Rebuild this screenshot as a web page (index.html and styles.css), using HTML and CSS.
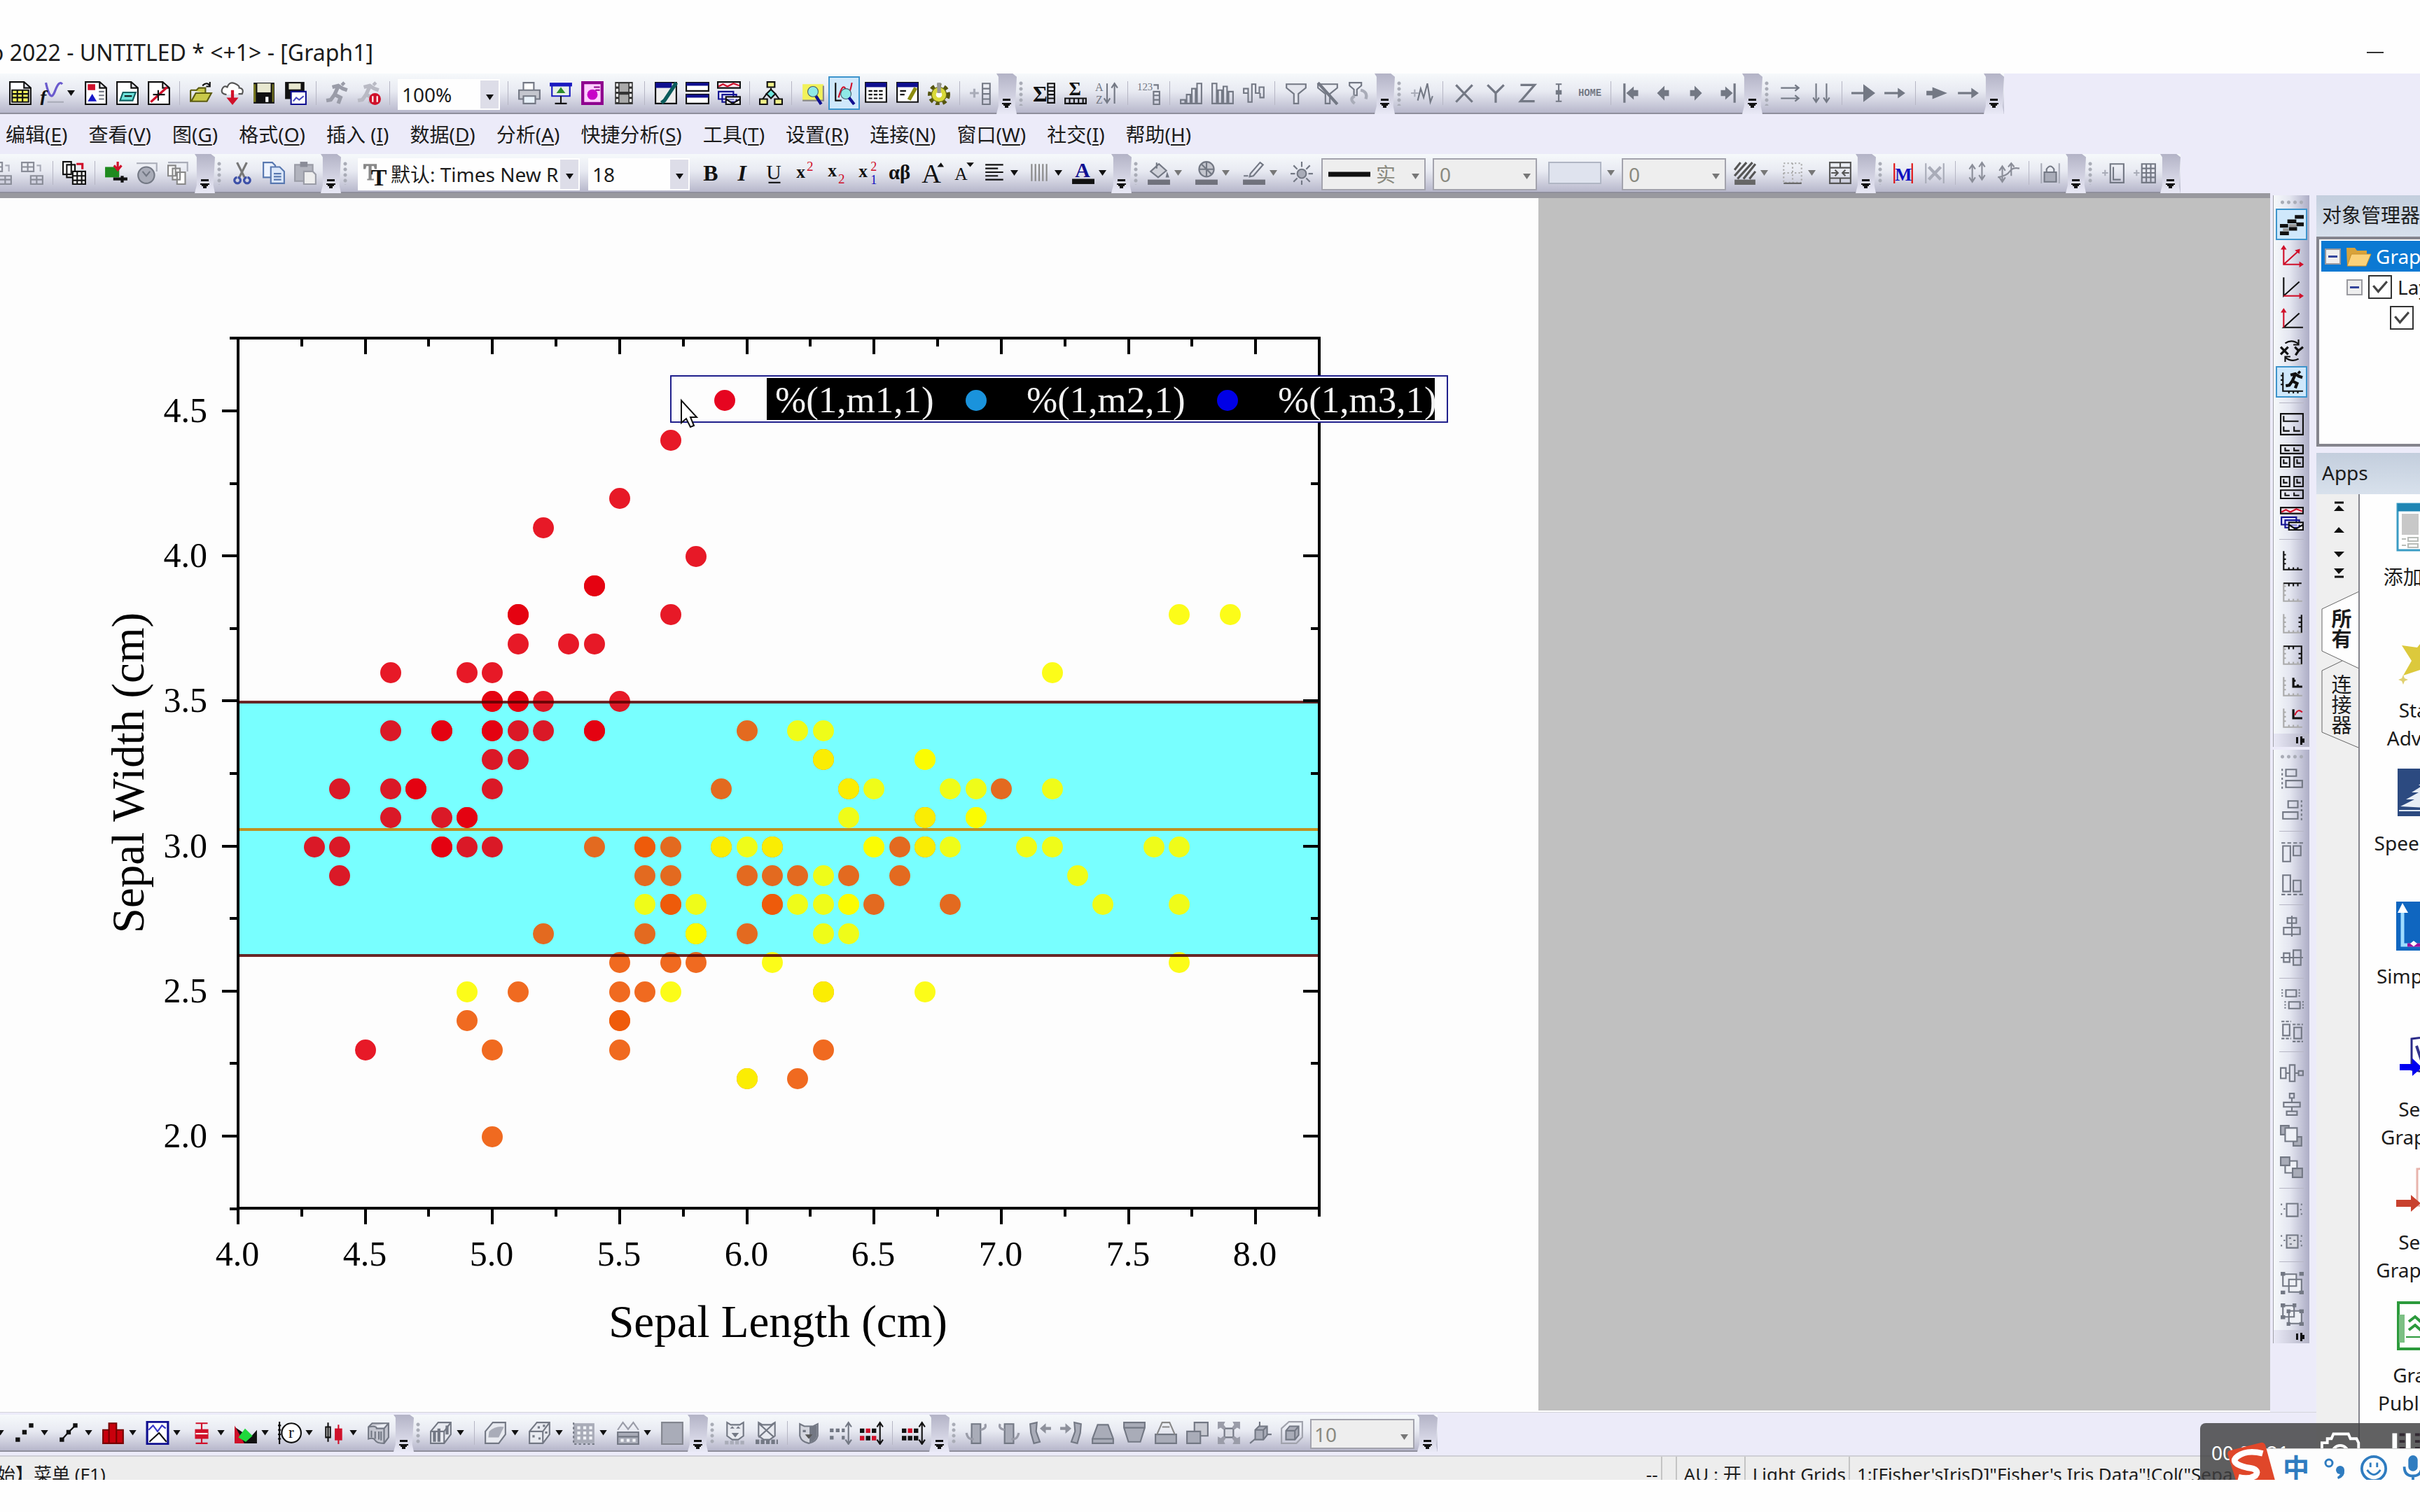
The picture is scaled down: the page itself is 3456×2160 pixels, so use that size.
FILE: index.html
```html
<!DOCTYPE html>
<html lang="zh-CN">
<head>
<meta charset="utf-8">
<title>UNTITLED - Graph1</title>
<link rel="stylesheet" href="styles.css">
</head>
<body>
<div class="frame">
  <header class="titlebar">
    <h1>o 2022 - UNTITLED * &lt;+1&gt; - [Graph1]</h1>
    <button class="minimise" aria-label="Minimise"></button>
  </header>

  <div class="bar bar-top">
    <div class="toolbar first">
      <span data-icons="sheet fn^ report layout matrix | open cloud save saveas | run runstop |"></span>
      <label class="combo zoom"><select aria-label="Zoom"><option>100%</option></select></label>
      <span data-icons="| printer slides pink film | note windows cascade | tree | find zoomgraph* table edit gear | addcol"></span>
    </div>
    <div class="toolbar"><span data-icons="sigcol sigrow sort | num | bars1 bars2 bars3 | funnel funnelx funnelr"></span></div>
    <div class="toolbar"><span data-icons="wave | gx gy gz info home | first prev next last"></span></div>
    <div class="toolbar"><span data-icons="right2 down2 | arrowbig arrowsm | arrowfat arrowsm"></span></div>
  </div>

  <nav class="menu">
    <button>编辑(<u>E</u>)</button><button>查看(<u>V</u>)</button><button>图(<u>G</u>)</button><button>格式(<u>O</u>)</button><button>插入 (<u>I</u>)</button><button>数据(<u>D</u>)</button><button>分析(<u>A</u>)</button><button>快捷分析(<u>S</u>)</button><button>工具(<u>T</u>)</button><button>设置(<u>R</u>)</button><button>连接(<u>N</u>)</button><button>窗口(<u>W</u>)</button><button>社交(<u>I</u>)</button><button>帮助(<u>H</u>)</button>
  </nav>

  <div class="bar">
    <div class="toolbar cut"><span data-icons="paste1 paste1 | pages | plug halt pagesg"></span></div>
    <div class="toolbar"><span data-icons="scissors copy paste"></span></div>
    <div class="toolbar">
      <label class="combo font"><span data-icons="tt"></span><select aria-label="Font"><option>默认: Times New R</option></select></label>
      <label class="combo size"><select aria-label="Font size"><option>18</option></select></label>
      <span data-icons="bold italic under sup sub supsub greek bigger smaller align^ vlines^ color^"></span>
    </div>
    <div class="toolbar wide">
      <span data-icons="bucket^ palette^ pen^ sun"></span>
      <label class="combo off line"><svg class="stroke" viewBox="0 0 60 8"><path d="M0 4H60" stroke="#111" stroke-width="7"/></svg><select aria-label="Line style" disabled><option>实</option></select></label>
      <label class="combo off"><select aria-label="Line width" disabled><option>0</option></select></label>
      <label class="swatch"><select aria-label="Fill colour" disabled><option></option></select></label>
      <label class="combo off"><select aria-label="Pattern" disabled><option>0</option></select></label>
      <span data-icons="hatch^ border^ cells"></span>
    </div>
    <div class="toolbar"><span data-icons="mask unmask | spread spreadx | lock"></span></div>
    <div class="toolbar"><span data-icons="newl newgrid"></span></div>
  </div>

  <main class="middle">
    <div class="left">
      <div class="desk">
        <section class="workspace">
          <svg class="plot" id="plot" viewBox="0 283 2197 1732" role="img" aria-label="Sepal Width against Sepal Length"></svg>
        </section>
        <aside class="dock">
          <div class="vbar"><span data-icons="stairs* axis3 axisx axisy xy runner* | lay1 lay2 lay3 cascade | ax1 ax2 ax3 ax4 ax5 ax6"></span></div>
          <div class="vbar"><span data-icons="al ar | at ab | ac am | sw sh | dh dv front back | grp1 grp2 | obj1 obj2"></span></div>
        </aside>
      </div>
      <div class="bar bottom">
        <div class="toolbar start"><span data-icons="none^ scatter^ lineplot^ column^ multi^ box^ area^ polar^ candle^ surf"></span></div>
        <div class="toolbar"><span data-icons="g3bar^ | g3a^ g3b^ heat^ panel^ square"></span></div>
        <div class="toolbar"><span data-icons="mask1 mask2 | shield dots dotsr | dotsk"></span></div>
        <div class="toolbar"><span data-icons="rotl rotr tiltl tiltr trap1 trap2 persp boxes fit cube1 cube2"></span><label class="combo off"><select aria-label="Rotation angle" disabled><option>10</option></select></label></div>
      </div>
    </div>

    <aside class="panel">
      <h2>对象管理器</h2>
      <ul class="tree">
        <li class="root"><span class="minus"></span><svg class="folder" viewBox="0 0 38 32"><path d="M2 4h12l3 4h14v6H9L3 30z" fill="#d9a33a"/><path d="M9 13h28l-7 17H3z" fill="#fbd27a" stroke="#c98f2a"/></svg><span>Graph1</span></li>
        <li class="layer"><span class="minus"></span><label><input type="checkbox" checked> Layer1</label></li>
        <li class="data"><label><input type="checkbox" checked aria-label="Plot"></label></li>
      </ul>
      <h2>Apps</h2>
      <div class="apps">
        <div class="tabs">
          <svg class="outline" viewBox="0 0 60 380"><path d="M37 238L8 252V340L60 362" fill="none" stroke="#666" stroke-width="1"/><path d="M61 139L8 164V224L61 249" fill="#fefefe" stroke="#666" stroke-width="1"/></svg>
          <svg class="arrows" viewBox="0 0 52 120"><path d="M18 8h13M18 114h13" stroke="#111" stroke-width="3"/><path d="M17 20l7-8 8 8zM17 51l7-8 8 8zM17 78l7 8 8-8zM17 102l7 8 8-8z" fill="#111"/></svg>
          <button class="tab on">所有</button>
          <button class="tab">连接器</button>
        </div>
        <ul class="applist">
          <li><svg viewBox="0 0 72 72"><rect x="2" y="2" width="68" height="66" fill="#fff" stroke="#3a9cc4" stroke-width="3"/><path d="M2 7H70" stroke="#1f86b4" stroke-width="11"/><rect x="8" y="16" width="24" height="30" fill="#c8c8c8"/><path d="M8 52h6M17 50h14v5H17zM8 61h6M17 59h14v5H17z" fill="none" stroke="#b8bcb8" stroke-width="2"/></svg>添加App</li>
          <li><svg viewBox="0 0 72 72"><path d="M8 14l22 3 12-15 6 20 22 8-20 10 2 24-18-15-24 8 12-21z" fill="#dcc93c"/><path d="M10 56l2 5 5 2-5 2-2 5-2-5-5-2 5-2z" fill="#e0d070"/></svg>Stats<br>Advisor</li>
          <li><svg viewBox="0 0 72 72"><rect x="2" width="68" height="68" fill="#2c4a80"/><path d="M6 54L26 44H14L32 34H22L38 24H32L46 12V56z" fill="#e6edf5"/><path d="M4 60h66" stroke="#dfe8f2" stroke-width="2"/></svg>Speedy Fit</li>
          <li><svg viewBox="0 0 72 72"><rect width="70" height="70" fill="#0f66c0"/><path d="M9 12V62H70" fill="none" stroke="#9fdcff" stroke-width="5"/><path d="M2 16L9 2l8 14z" fill="#fff"/><path d="M16 62h54" stroke="#a0109c" stroke-width="5"/><path d="M20 60l5-4 5 4-5 4zM38 58l5-4 5 4-5 4z" fill="#fff"/></svg>Simple Fit</li>
          <li><svg viewBox="0 0 72 72"><path d="M22 6L70 0V60L22 50z" fill="#fff" stroke="#2a2a88" stroke-width="3"/><path d="M29 16l6 18 5-16 5 16 6-18" fill="none" stroke="#33338c" stroke-width="4"/><path d="M5 42h18v-8l14 13-14 12v-8H5z" fill="#0000f0"/></svg>Send<br>Graph to</li>
          <li><svg viewBox="0 0 72 72"><path d="M30 2L70 0V60L30 54z" fill="#fff" stroke="#e8b4ac" stroke-width="3"/><path d="M0 46h21v-7l14 12-14 12v-7H0z" fill="#c8412e"/></svg>Send<br>Graphs to</li>
          <li><svg viewBox="0 0 72 72"><rect x="3" y="3" width="66" height="66" fill="#fff" stroke="#2c9a3c" stroke-width="4"/><path d="M8 20v40" stroke="#7cc084" stroke-width="8"/><path d="M14 52h54" stroke="#2c9a3c" stroke-width="2"/><path d="M18 30l9-7 9 8 10-8 8 7M18 42l9-7 9 8 10-8 8 7" fill="none" stroke="#2c9a3c" stroke-width="4"/></svg>Graph<br>Publisher</li>
        </ul>
      </div>
    </aside>
  </main>

  <footer class="status">
    <span class="hint">始】菜单 (F1)</span>
    <span class="cell dash">--</span>
    <span class="cell edge">AU : 开</span>
    <span class="cell">Light Grids</span>
    <span class="cell last">1:[Fisher'sIrisD]"Fisher's Iris Data"!Col("Sepa</span>
  </footer>

  <div class="recorder">
    <span class="timer">00:00:21</span>
    <svg class="camera" viewBox="0 0 60 40"><path d="M3 36V16h8V10h6l3-7h22l3 7h9l3 6v20" fill="none" stroke="#fff" stroke-width="4"/><circle cx="30" cy="32" r="12" fill="none" stroke="#fff" stroke-width="4"/></svg>
    <svg class="film" viewBox="0 0 42 40"><path d="M5 2V40M25 2V40" stroke="#fff" stroke-width="7"/><path d="M12 4h8M12 14h8M12 24h8M35 4h7M35 14h7M35 24h7" stroke="#332a33" stroke-width="4"/></svg>
  </div>
  <div class="ime">
    <span>中</span>
    <svg viewBox="0 0 32 40"><circle cx="8" cy="12" r="5" fill="none" stroke="#2f7cc0" stroke-width="3"/><circle cx="24" cy="22" r="6" fill="#2f7cc0"/><path d="M30 22q1 10-9 13l-1-3q6-4 5-10z" fill="#2f7cc0"/></svg>
    <svg viewBox="0 0 42 42"><circle cx="21" cy="21" r="18" fill="none" stroke="#2f7cc0" stroke-width="4"/><path d="M16 12v7M26 12v7M11 23q10 14 20 0" fill="none" stroke="#2f7cc0" stroke-width="3"/></svg>
    <svg viewBox="0 0 32 42"><rect x="9" y="1" width="14" height="24" rx="7" fill="#2f7cc0"/><path d="M3 18q0 14 13 14t13-14M16 32v10" fill="none" stroke="#2f7cc0" stroke-width="4"/></svg>
  </div>
  <svg class="sogou" viewBox="0 0 72 56"><path d="M3 13L50 1q5-1 7 4L71 56H13L1 18q0-4 2-5z" fill="#e0472a"/><path d="M53 17Q30 11 16 21t14 17q20 2 12 12-10 6-25 2" fill="none" stroke="#fff" stroke-width="9"/></svg>
</div>
<script src="app.js"></script>
</body>
</html>
```
FILE: styles.css
```css
* { box-sizing: border-box; }
body {
  margin: 0;
  min-height: 100vh;
  background: #fefefe;
  color: #1c1c1c;
  font: 28px/40px "Noto Sans", "Noto Sans CJK SC", sans-serif;
  overflow: hidden;
}
button, select, input { font: inherit; color: inherit; margin: 0; padding: 0; border: 0; background: none; }
h1, h2, ul { margin: 0; padding: 0; font-weight: 400; list-style: none; }
.frame {
  position: relative;
  display: flex;
  flex-direction: column;
  min-height: calc(100vh - 46px);
  background: #ecebf9;
  overflow: hidden;
}

.titlebar {
  display: flex;
  justify-content: space-between;
  align-items: center;
  height: 105px;
  padding: 44px 52px 0 0;
  background: #fefefe;
}
.titlebar h1 { font-size: 32px; margin-left: -14px; white-space: pre; }
.minimise { width: 24px; height: 2px; background: #333; }

.bar { display: flex; height: 56px; white-space: nowrap; overflow: hidden; }
.bar-top { height: 58px; }
.toolbar { display: flex; flex: none; align-items: stretch; background: linear-gradient(#f6f9fb, #e8eaf2 45%, #b7b7cb); border-bottom: 2px solid #8f8f9c; }
.toolbar > span, .vbar > span, .combo > span { display: contents; }
.toolbar::before {
  content: "";
  width: 16px;
  background: radial-gradient(circle, #a9acb6 2px, transparent 3px) 0 10px / 12px 8px repeat-y;
  background-clip: content-box;
  padding: 10px 0;
}
.toolbar.first::before, .toolbar.cut::before, .toolbar.start::before { display: none; }
.toolbar.first { padding-left: 6px; }
.toolbar.cut { margin-left: -22px; }
.toolbar.start { margin-left: -50px; }
.toolbar::after {
  content: "";
  width: 29px;
  margin-bottom: -2px;
  background:
    linear-gradient(#111, #111) 50% 36px / 11px 3px no-repeat,
    linear-gradient(#111, #111) 50% 42px / 13px 2px no-repeat,
    linear-gradient(#111, #111) 50% 44px / 9px 2px no-repeat,
    linear-gradient(#111, #111) 50% 46px / 5px 3px no-repeat,
    linear-gradient(#b3b3c6, #e9e9f6);
  clip-path: polygon(0 0, 80% 0, 100% 8%, 92% 80%, 100% 100%, 0 100%, 10% 80%, 10% 8%);
}
.tool { flex: none; width: 45px; display: flex; align-items: center; justify-content: center; }
.tool svg { width: 34px; height: 34px; display: block; }
.tool.on { margin: 4px 0; background: #cfe8fb; border: 2px solid #3d94cc; }
.caret { flex: none; width: 18px; display: flex; align-items: center; }
.caret::before, .combo::after, .swatch::after {
  content: "";
  width: 11px;
  height: 8px;
  background: #111;
  clip-path: polygon(0 0, 100% 0, 50% 100%);
}
.wide .caret { width: 23px; }
.wide .caret::before, .off::after, .swatch::after { background: #777; }
.sep { flex: none; width: 15px; background: linear-gradient(#b6b6c4, #b6b6c4) 50% 50% / 1px 34px no-repeat; }

.combo {
  position: relative;
  display: flex;
  align-items: center;
  width: 149px;
  margin: 6px 4px 2px;
  background: #fefefe;
}
.wide .combo { margin: 6px 4px 2px 6px; }
.combo::after { position: absolute; right: 7px; top: 20px; }
.combo select { appearance: none; flex: 1; min-width: 0; height: 100%; padding-left: 4px; opacity: 1; }
.wide .combo select { padding-left: 8px; }
.combo.zoom { width: 146px; margin: 8px 4px 4px; }
.combo.font { width: 317px; margin-left: 8px; }
.combo.size { width: 145px; margin: 6px 8px 2px; }
.combo:not(.off) { background: linear-gradient(90deg, transparent calc(100% - 26px), #dddde8 0), #fefefe; border: 2px solid #fefefe; }
.combo.off { background: #eee; border: 2px solid #a3a3ad; color: #8a8a80; }
.combo.font select { padding: 0; }
.combo.line .stroke { width: 60px; height: 8px; margin-left: 8px; }
.swatch { display: flex; align-items: center; margin: 12px 4px 12px 12px; }
.swatch select { appearance: none; width: 76px; height: 32px; margin-right: 8px; border: 2px solid #b0b6c4; opacity: 1; background: #dfe3ee; }

.menu { display: flex; gap: 30px; height: 57px; padding-left: 8px; white-space: pre; }
.menu u { text-underline-offset: 3px; }

.middle { display: flex; flex: 1; }
.left { flex: 1; display: flex; flex-direction: column; min-width: 0; }
.desk { flex: 1; display: flex; }
.workspace {
  flex: 1;
  display: grid;
  grid-template-columns: 2197fr 1045fr;
  align-items: stretch;
  border-top: 7px solid #99999f;
  border-bottom: 2px solid #fefefe;
  background: #c0c0c0;
}
.plot { width: 100%; background: #fdfdfd; display: block; }
.plot text { font-family: "Liberation Serif", serif; }
.dock { width: 66px; padding: 3px 10px 0 4px; }
.vbar {
  display: flex;
  flex-direction: column;
  margin-bottom: 4px;
  background: linear-gradient(90deg, #f6f9fb, #e4e6f0 45%, #adadc6);
  border-left: 1px solid #a0a0a8;
}
.vbar::before { content: ""; height: 19px; margin: 0 8px; background: radial-gradient(circle, #a9acb6 2px, transparent 3px) 0 4px / 9px 12px repeat-x; }
.vbar::after {
  content: "";
  height: 19px;
  background:
    linear-gradient(#111, #111) 32px 50% / 3px 9px no-repeat,
    linear-gradient(#111, #111) 38px 50% / 3px 12px no-repeat,
    linear-gradient(#111, #111) 41px 50% / 3px 6px no-repeat,
    linear-gradient(90deg, #e9e9f6, #b3b3c6);
}
.vbar .tool { width: auto; height: 45px; }
.vbar .tool.on { margin: 0 3px; }
.vbar .sep { width: auto; height: 15px; margin: 0 8px; background: linear-gradient(#b6b6c4, #b6b6c4) 0 50% / 100% 1px no-repeat; }
.bottom { height: 64px; padding: 3px 0 5px; border-top: 1px solid #d4d4da; border-bottom: 2px solid #cfcfd6; }

.panel { width: 148px; padding-top: 3px; overflow: hidden; display: flex; flex-direction: column; }
.panel h2 { width: 240px; height: 59px; padding: 8px 0 0 8px; font-size: 28px; background: linear-gradient(#c3cedd, #d8e1ec); }
.tree { width: 240px; height: 300px; margin-bottom: 9px; padding: 2px 0 0 3px; background: #fefefe; border: 4px solid #85858d; border-right: 0; }
.tree li { display: flex; align-items: center; height: 44px; gap: 8px; }
.tree .root { padding-left: 5px; gap: 6px; background: #0b79d3; color: #fff; }
.tree .layer { padding-left: 36px; }
.tree .data { padding-left: 98px; }
.tree label { display: flex; align-items: center; gap: 8px; }
.minus { flex: none; width: 23px; height: 23px; border: 2px solid #9a9aa0; background: linear-gradient(#34469c, #34469c) 50% 50% / 13px 3px no-repeat #eee; }
.folder { flex: none; width: 38px; height: 32px; }
.tree input { appearance: none; flex: none; width: 34px; height: 34px; border: 2px solid #333; background: #fff; }
.tree input::after { content: ""; display: block; width: 22px; height: 18px; margin: 6px 4px; background: #444; clip-path: polygon(0 45%, 12% 35%, 38% 72%, 90% 0, 100% 12%, 38% 100%); }
.apps { flex: 1; display: flex; width: 240px; background: #efefef; }
.tabs { position: relative; width: 60px; flex: none; padding-left: 8px; }
.outline { position: absolute; left: 0; top: 0; width: 60px; height: 380px; }
.arrows { position: relative; display: block; width: 52px; height: 120px; margin: 4px 0 14px; }
.tab { position: relative; display: block; width: 52px; height: 108px; writing-mode: vertical-rl; line-height: 52px; text-align: center; font-size: 29px; }
.tab.on { font-weight: 700; }
.applist { width: 178px; border-left: 2px solid #85858d; background: #fefefe; text-align: center; padding-top: 10px; }
.applist li { height: 190px; padding-top: 2px; }
.applist svg { display: block; width: 72px; height: 72px; margin: 0 auto 14px; }

.status { display: flex; height: 33px; line-height: 50px; font-size: 26px; background: #ededed; white-space: pre; overflow: hidden; }
.hint { flex: 1; margin-left: -4px; }
.cell { border-right: 2px solid #c4c4c4; padding: 0 4px 0 10px; }
.dash { margin-right: 19px; }
.edge { border-left: 2px solid #c4c4c4; }
.last { width: 814px; border: 0; }

.recorder { position: absolute; right: 0; bottom: 0; width: 314px; height: 81px; padding: 12px 0 0 16px; display: flex; gap: 44px; background: rgba(62, 62, 64, 0.82); border-radius: 8px 0 0 0; color: #fff; }
.timer { line-height: 60px; }
.recorder svg { height: 40px; }
.camera { width: 60px; }
.film { width: 42px; }
.ime { position: absolute; right: 0; bottom: 0; width: 256px; height: 45px; padding: 8px 0 0 60px; display: flex; gap: 16px; background: #fdfdfd; border-top: 1px solid #ccc; color: #2f7cc0; overflow: hidden; }
.ime span { font-size: 38px; line-height: 36px; font-weight: 700; }
.ime svg { flex: none; height: 40px; width: 40px; }
.sogou { position: absolute; right: 206px; bottom: 0; width: 70px; height: 54px; }
```
FILE: app.js
```js
// Small drawing helpers; every icon sits on a 32 x 32 grid.
const G = '#737884', K = '#111', F = '#a9acb8', R = '#d0102a', N = '#101090';
const p = (d, s = G, f = 'none', w = 2) => `<path d="${d}" stroke="${s}" fill="${f}" stroke-width="${w}"/>`;
const f = (d, c = G) => `<path d="${d}" fill="${c}"/>`;
const t = (x, y, s, size = 30, c = K, extra = '') => `<text x="${x}" y="${y}" font-size="${size}" fill="${c}" font-family="Liberation Serif, serif" ${extra}>${s}</text>`;
const doc = p('M2 1H21L30 9V31H2zM21 1V9H30', K, '#fff');
const runner = c => p('M22 2l3 3M9 8l8-2 6 4 6 2M17 7l-5 11 8 4-3 8M12 18l-5 7-6 1', c, 'none', 5);
const axes = 'M5 3V28H30M5 8h3M5 14h3M5 20h3M12 28v-3M18 28v-3M24 28v-3';
const cubeD = 'M2 14L12 2H29V18L20 30H2zM2 14H20V30M20 14L29 2';

const icons = {
  none: '',
  sheet: doc + f('M6 12H26V28H6z', '#f2f25a') + p('M5 12H27V28H5zM5 17H27M5 22H27M12 12V28M19 12V28', K),
  fn: p('M8 2Q14 30 20 14T30 4', '#6a5acd', 'none', 3) + p('M10 28H32', F) + t(0, 30, 'f', 26, K, 'font-weight="700" font-style="italic"'),
  report: doc + f('M5 4H15V12H5z', R) + f('M5 27L11 17L17 27z', '#1818c8') + p('M20 14h7M20 19h7M20 24h7', G),
  layout: doc + p('M10 15H27L23 26H6z', '#0f6060', '#6fe3dc') + p('M12 20h10', K),
  matrix: doc + p('M5 28L27 8', R, 'none', 3) + p('M15 12V26M8 18H24', K),
  open: p('M2 12V27H24L30 16H9L3 27M2 12H10L13 9H22V16', '#5c5c10', '#c9c94a') + p('M18 6Q24 0 28 6M28 1V7H23', K),
  cloud: p('M8 18Q0 17 2 11T9 8Q12 0 19 3T25 9Q32 10 29 17H24', '#555', '#fff') + p('M16 12V28', R, 'none', 4) + f('M8 22H24L16 32z', R),
  save: f('M2 2H30V30H2z', K) + f('M7 3H25V15H7z', '#e8e8d0') + f('M2 4H5V28H2zM27 4H29V28H27z', '#7a7a20') + f('M18 21H22V28H18z', '#fff'),
  saveas: f('M2 1H28V24H2z', K) + f('M7 3H23V11H7z', '#e8e8d0') + p('M10 14H30V31H10z', N, '#fff') + p('M13 27l4-5 4 3 6-5', '#4a4ac0'),
  run: runner('#9a9ca8'),
  runstop: runner('#b9bac4') + `<circle cx="24" cy="24" r="8" fill="${R}"/>` + p('M21 20V28M27 20V28', '#fff'),
  printer: p('M8 13V2H22V13', G, '#fff') + p('M2 12H30V24H2z', G, '#c4c6ce') + p('M8 20H24V30H8z', G, '#e9f2fa'),
  slides: f('M1 2H31V7H1z', '#1a1ac0') + p('M4 6H28V20H4z', '#1a1ac0', '#e8f0e8') + f('M10 16l6-8 6 8z', '#2c8c2c') + p('M16 20V30M8 30H24', K),
  pink: p('M3 2H29V30H3z', '#8e008e', '#ffd0ff', 4) + `<circle cx="16" cy="18" r="7" fill="#c800c8"/>` + p('M18 8h8M20 12h6', '#8e008e'),
  film: f('M4 1H28V31H4z', '#333') + f('M10 3H22V14H10zM10 18H22V29H10z', '#aaa') + p('M7 3V30M25 3V30', '#fff', 'none', 3).replace('/>', ' stroke-dasharray="4 3"/>'),
  note: p('M2 2H30V30H2z', K, '#eee') + f('M2 2H24V9H2z', N) + p('M30 2L14 26L10 29', '#0c5c5c', 'none', 5),
  windows: p('M1 2H31V13H1zM1 18H31V30H1z', K, '#fff') + f('M1 2H31V6H1zM1 18H31V22H1z', N),
  cascade: p('M1 1H31V9H1z', K, '#ffe8f0') + p('M2 7L8 4L14 7L22 3L30 6', R) + p('M2 14H22V24H2zM7 18H26V28H7z', N, '#e4e4ff') + p('M12 21H31V31H12zM12 24L21 30L31 24', K, '#fff'),
  tree: p('M16 9V14M10 17L5 24M22 17L27 24', K) + p('M11 1H21V8H11zM1 24H11V31H1zM21 24H31V31H21z', K, '#f2f28a') + p('M16 11L22 17L16 23L10 17z', K, '#6fe3dc'),
  find: f('M2 4H30V26H2z', '#f2f25a') + p('M2 26H30V6', '#888') + `<circle cx="16" cy="14" r="7" fill="#8fe9e6" stroke="#456"/>` + p('M20 20L27 31', N, 'none', 4),
  zoomgraph: p('M4 2V26H12', K) + p('M8 22Q14 0 18 12T26 2', R) + `<circle cx="18" cy="17" r="7" fill="#8fe9e6" stroke="#456"/>` + p('M22 22L29 31', N, 'none', 4),
  table: p('M2 2H30V28H2z', K, '#fff') + f('M2 2H30V8H2z', N) + p('M6 13h20M6 18h20M6 23h20', K).replace('/>', ' stroke-dasharray="5 2"/>'),
  edit: p('M2 2H30V28H2z', K, '#fff') + f('M2 2H30V8H2z', N) + p('M6 13h8M6 18h6', K) + p('M27 9L18 25', '#8c8c10', 'none', 5),
  gear: `<circle cx="16" cy="18" r="12" fill="none" stroke="#555510" stroke-width="6" stroke-dasharray="5 4"/><circle cx="16" cy="18" r="10" fill="#d9d93a" stroke="#6c6c18"/><circle cx="16" cy="18" r="4" fill="#fff"/>` + p('M16 2V16', '#999', 'none', 5),
  addcol: p('M18 3H28V31H18zM18 10H28M18 17H28M18 24H28') + p('M1 16H13M7 10V22', F, 'none', 3),
  sigcol: t(1, 27, 'Σ', 30, K, 'font-weight="700"') + p('M21 3H30V29H21zM21 8H30M21 13H30M21 18H30M21 23H30', K),
  sigrow: t(7, 19, 'Σ', 25, K, 'font-weight="700"') + p('M2 23H30V30H2zM8 23V30M14 23V30M20 23V30M26 23V30', K),
  sort: t(0, 13, 'A', 15, G) + t(1, 30, 'Z', 15, G) + p('M16 3V28M12 23L16 29L20 23M26 30V4M22 9L26 3L30 9'),
  num: t(0, 12, '123', 14, G) + p('M22 5H28V11M22 14H30V31H22zM22 19H30M22 25H30'),
  bars1: p('M2 30V25H8V30M10 30V18H15V30M17 30V10H22V30M24 30V3H30V30M1 30H31'),
  bars2: p('M2 30V3H8V30M10 30V12H15V30M17 30V7H22V30M24 30V14H30V30M1 30H31'),
  bars3: p('M2 16V10H8V28H13V4H18V16H23V8H29V22H24V16M1 16H8'),
  funnel: p('M3 4H29V9L19 17V30H13V17L3 9z', G, '#e4e6ee'),
  funnelx: p('M3 4H29V9L19 17V30H13V17L3 9z') + p('M3 2L29 31', G, 'none', 4),
  funnelr: p('M3 2H19V6L13 11V19H9V11L3 6z') + p('M18 12Q28 14 25 24M10 30Q2 24 10 20', F, 'none', 4),
  wave: p('M1 16H11M6 11V21', F) + p('M10 26L14 10L18 22L23 3L27 28L30 20'),
  gx: p('M5 5L27 28M27 5L5 28', G, 'none', 3),
  gy: p('M5 5L16 16L27 5M16 16V29', G, 'none', 3),
  gz: p('M7 5H26L7 27H26', G, 'none', 3),
  info: p('M16 4V27M12 27H20M12 4H20') + f('M12 12H20V18H12z'),
  home: `<text x="0" y="20" font-size="13" font-family="Liberation Mono, monospace" font-weight="700" fill="${G}">HOME</text>`,
  first: f('M4 3H7V29H4zM8 16L18 7V12H24V20H18V25z'),
  prev: f('M7 16L17 6V12H23V20H17V26z'),
  next: f('M25 16L15 6V12H9V20H15V26z'),
  last: f('M28 3H25V29H28zM24 16L14 7V12H8V20H14V25z'),
  right2: p('M4 9H28M23 5L28 9L23 13M4 23H28M23 19L28 23L23 27'),
  down2: p('M9 3V27M5 22L9 28L13 22M23 3V27M19 22L23 28L27 22'),
  arrowbig: p('M0 16H18', G, 'none', 3) + f('M16 4L32 16L16 28z'),
  arrowsm: p('M2 16H22', G, 'none', 3) + f('M20 9L30 16L20 23z'),
  arrowfat: f('M2 13H10V8L30 16L10 24V19H2z'),
  paste1: p('M2 2H18V14H2zM2 8H18M10 2V14M14 20H30V31H14zM14 25H30M22 20V31', '#8a8d98') + p('M22 6H27V14', F),
  pages: p('M1 1H12V18H1zM6 5H17V22H6z', K, '#fff') + p('M14 14H31V31H14zM14 20H31M14 26H31M20 14V31M26 14V31', K, '#fff') + p('M19 4H27V11', R, 'none', 3),
  plug: f('M1 8H20V22H1z', '#1e8a1e') + p('M18 1V10M13 6L18 12L23 6', R, 'none', 3) + p('M12 24H31M24 20V29', K, 'none', 4),
  halt: `<circle cx="14" cy="19" r="11" fill="${F}" stroke="${G}" stroke-width="2"/>` + p('M1 3H28V14', F) + p('M9 14l5 6 5-6'),
  pagesg: p('M1 6H11V20H1zM7 10H17V25H7zM13 15H24V31H13z', '#888', '#fff') + p('M1 2H27V14', F),
  scissors: p('M9 2L19 22M22 2L12 22', '#777', 'none', 3) + p('M9 22a4 4 0 1 0 1 0M22 22a4 4 0 1 0 1 0', '#3c50a8', 'none', 3),
  copy: p('M2 2H14L18 6V22H2z', '#5878b0', '#eef4ff') + p('M12 8H24L30 14V30H12z', '#5878b0', '#dce8fa') + p('M16 17h10M16 21h10M16 25h10', '#5878b0'),
  paste: p('M2 5H26V27H2z', '#9a9ca6', '#b2b4be') + f('M9 1H19V8H9z', '#8a8c98') + p('M14 14H26L30 18V31H14z', '#9a9ca6', '#eee'),
  tt: f('M0 2H18V9H15L14 5H11V22H14V24H5V22H7V5H4L3 9H0z', '#888') + t(10, 31, 'T', 32, K, 'font-weight="700"'),
  bold: t(5, 26, 'B', 30, K, 'font-weight="700"'),
  italic: t(9, 26, 'I', 30, K, 'font-weight="700" font-style="italic"'),
  under: t(5, 24, 'U', 28) + p('M8 29H24', K),
  sup: t(3, 23, 'x', 24, K, 'font-weight="700"') + t(17, 13, '2', 18, R),
  sub: t(3, 21, 'x', 24, K, 'font-weight="700"') + t(17, 30, '2', 18, R),
  supsub: t(2, 22, 'x', 24, K, 'font-weight="700"') + t(18, 13, '2', 17, R) + t(18, 31, '1', 17, '#1010c0'),
  greek: t(0, 24, 'αβ', 27, K, 'font-weight="700"'),
  bigger: t(2, 29, 'A', 36, K) + f('M23 8L28 2L32 8z', K),
  smaller: t(4, 25, 'A', 24, K) + f('M20 2L30 2L25 8z', K),
  align: p('M3 5H27M3 10H20M3 15H27M3 20H20M3 25H27', K),
  vlines: p('M6 4V27M11 4V27M16 4V27M21 4V27M26 4V27', '#888'),
  color: t(5, 22, 'A', 28, N, 'font-weight="700"') + f('M1 24H31V31H1z', K),
  bucket: p('M5 14L16 4L26 13L15 22zM13 2V10', G, '#d0d2da') + f('M27 14L30 22H25z') + f('M1 25H31V32H1z', '#70727c'),
  palette: `<circle cx="16" cy="11" r="10" fill="#c4c6ce" stroke="${G}" stroke-width="2"/>` + p('M6 11H26M16 1V21M9 4L23 18') + f('M1 25H31V32H1z', '#70727c'),
  pen: p('M24 2L28 5L15 20L10 21L11 17zM2 20H8') + f('M1 25H31V32H1z', '#70727c'),
  sun: `<circle cx="16" cy="17" r="6" fill="${F}" stroke="${G}" stroke-width="2"/>` + p('M16 1V8M16 26V32M1 17H7M25 17H31M5 6L10 11M27 6L22 11M5 28L10 23M27 28L22 23'),
  hatch: p('M2 12L10 2M2 20L18 2M6 24L26 2M14 24L30 4M22 24L30 14', '#555', 'none', 3) + f('M2 25H30V32H2z', '#666'),
  border: p('M4 3H28V29H4zM4 16H28M16 3V29', '#aaa').replace('/>', ' stroke-dasharray="2 3"/>') + p('M4 30H28', '#666'),
  cells: p('M2 2H30V30H2zM2 9H30M2 23H30M16 2V9M16 23V30', '#555') + p('M4 16H12M20 16H28M9 12L13 16L9 20M23 12L19 16L23 20', '#555'),
  mask: p('M4 3V30M28 3V30', '#e01010') + t(5, 26, 'M', 24, '#1010c0', 'font-weight="700"'),
  unmask: p('M4 3V30M28 3V30', F) + p('M8 8L24 25M24 8L8 25', F, 'none', 4),
  spread: p('M10 6V27M6 11L10 5L14 11M6 22L10 28L14 22M23 3V24M19 8L23 2L27 8M19 19L23 25L27 19', '#8a8d98'),
  spreadx: p('M8 8V26M4 13L8 7L12 13M4 22L8 28L12 22M20 4V20M16 8L20 3L24 8M2 22Q14 20 18 14T31 10', '#8a8d98'),
  lock: p('M4 3V30M28 3V30', F) + p('M8 15H24V28H8z', G, F) + p('M11 15V11Q16 3 21 11V15'),
  newl: p('M12 4H30V29H12zM16 8V25H26') + p('M1 16H9M5 12V20', F),
  newgrid: p('M12 4H30V29H12zM12 10H30M12 16H30M12 22H30M18 4V29M24 4V29') + p('M1 16H9M5 12V20', F),
  stairs: f('M20 3H32V8H20zM10 9H22V14H10zM0 15H11V20H0zM22 13H32V18H22zM12 19H23V24H12zM0 25H12V30H0z', K) + f('M12 15H22V19H12zM4 21H12V25H4z', '#999'),
  axis3: p('M5 4V27H30M5 27L26 8', R) + f('M1 7L5 1L9 7zM26 23L32 27L26 31zM20 8L27 6L26 13z', R),
  axisx: p('M5 2V27L26 8', K) + p('M5 27H30', R) + f('M26 23L32 27L26 31z', R),
  axisy: p('M31 27H5L26 8', K) + p('M5 27V4', R) + f('M1 7L5 1L9 7z', R),
  xy: p('M1 11L11 21M11 11L1 21M20 11L25 16L31 11M25 16L21 22', K, 'none', 3) + p('M7 6Q16 0 25 7M25 1V8H18M25 27Q16 32 7 25M7 31V24H14', K),
  runner: p('M4 3V28H31M4 7h-3M4 13h-3M4 19h-3M12 28v3M18 28v3M24 28v3', K) + `<g transform="translate(7 0) scale(.8)">${runner(K)}</g>`,
  lay1: p('M1 2H31V30H1zM5 5V12H25M5 19V25H13M19 19V25H27', K),
  lay2: p('M1 2H31V13H1zM1 18H13V31H1zM19 18H31V31H19zM7 5V9H13M19 5V9H26M5 21V26H10M23 21V26H28', K),
  lay3: p('M1 20H31V31H1zM1 2H13V15H1zM19 2H31V15H19zM7 23V27H13M19 23V27H26M5 5V10H10M23 5V10H28', K),
  ax1: p(axes, K),
  ax2: p(axes, '#aaa') + p('M5 4H29M12 4v4M18 4v4M24 4v4', K),
  ax3: p(axes, '#aaa') + p('M29 4V28M29 8h-4M29 14h-4M29 20h-4', K),
  ax4: p(axes, '#aaa') + p('M5 4H29V28M12 4v4M18 4v4M29 14h-4M29 20h-4', K),
  ax5: p(axes, '#aaa') + p('M18 4V16H30M18 8h3M24 16v-3', K, 'none', 3),
  ax6: p(axes, '#aaa') + p('M18 4V16H30', K, 'none', 3) + p('M20 12Q24 2 30 8', R),
  al: p('M3 2V29').replace('/>', ' stroke-dasharray="3 3"/>') + p('M8 3H22V12H8zM8 18H30V27H8z'),
  ar: p('M29 2V29').replace('/>', ' stroke-dasharray="3 3"/>') + p('M11 3H24V12H11zM4 18H24V27H4z'),
  at: p('M2 3H31').replace('/>', ' stroke-dasharray="5 3"/>') + p('M4 7H14V28H4zM18 7H28V20H18z'),
  ab: p('M2 30H31').replace('/>', ' stroke-dasharray="5 3"/>') + p('M4 4H14V26H4zM18 11H28V26H18z'),
  ac: p('M16 2V30M10 5H22V12H10zM5 18H27V27H5z'),
  am: p('M1 16H31M5 10H13V22H5zM18 6H28V26H18z'),
  sw: p('M8 3H22V12H8zM12 19H27V28H12z') + p('M3 2V13M26 2V13M7 18V29M31 18V29').replace('/>', ' stroke-dasharray="2 2"/>'),
  sh: p('M4 7H13V22H4zM19 11H29V26H19z') + p('M2 3H15M2 26H15M17 7H31M17 30H31').replace('/>', ' stroke-dasharray="4 2"/>'),
  dh: p('M1 9H8V23H1zM13 5H20V27H13zM25 13H31V19H25zM8 16H13M20 16H25'),
  dv: p('M13 1H19V7H13zM5 13H27V19H5zM9 25H23V30H9zM16 7V13M16 19V25'),
  front: p('M1 2H12V14H1zM18 17H29V29H18z', G, F) + p('M7 5H23V23H7z', G, '#eef0f6'),
  back: p('M7 7H23V23H7z', G, '#eef0f6') + p('M1 2H13V13H1zM17 17H30V29H17z', G, F),
  grp1: p('M9 8H24V25H9z') + p('M1 9h2M5 15h2M1 22h2M30 9h-2M27 16h2M30 22h-2'),
  grp2: p('M9 8H24V25H9z', G, '#d8dae2') + p('M1 9h2M5 15h2M1 22h2M30 9h-2M27 16h2M30 22h-2M12 12h3M18 15h3M13 20h3'),
  obj1: p('M4 4H22V20H4zM12 11H29V28H12z', G, '#eef0f6') + f('M1 1H7V6H1zM26 1H32V6H26zM1 26H7V31H1zM26 26H32V31H26z'),
  obj2: p('M4 4H19V19H4zM12 11H29V28H12z', G, '#eef0f6') + f('M1 1H7V6H1zM17 1H22V6H17zM1 17H7V22H1zM9 9H14V14H9zM26 9H32V14H26zM9 26H14V31H9zM26 26H32V31H26z'),
  scatter: f('M21 3H27V9H21zM12 12H18V18H12zM3 22H9V28H3z', K),
  lineplot: p('M6 25L15 15L24 6', K) + f('M21 3H27V9H21zM12 12H18V18H12zM3 22H9V28H3z', K),
  column: p('M2 12H10V30H2zM20 12H29V30H20zM10 3H20V30H10z', '#700', '#c8000c'),
  multi: p('M2 1H30V31H2z', N, '#fff', 3) + p('M4 12L10 6L16 14L22 6L27 10', '#3a3ac8') + p('M5 28L18 16L28 28', K),
  box: p('M8 3H24M16 3V30M8 30H24', R) + f('M7 11H25V24H7z', R) + p('M8 17H24', '#fff'),
  area: f('M1 8V30H31V12L22 22z', K) + f('M1 6V30H14z', R) + f('M6 22L15 10L25 20L16 28z', '#1fd83c'),
  polar: `<circle cx="18" cy="16" r="13" fill="#fff" stroke="${K}" stroke-width="2"/>` + t(14, 23, 'r', 22) + p('M2 1V31M0 6H4M0 12H4M0 18H4M0 24H4', K),
  candle: p('M8 2V28M5 8H11V22H5z', K, '#fff') + p('M22 5V31', R) + f('M17 10H27V26H17z', R),
  surf: p('M3 8L8 3H30V22L24 30Q14 30 12 26T3 24zM3 8Q14 6 14 10H24L30 3M24 10V30', G, '#c4c6d0') + p('M7 13V22M12 14V24M17 14V25M20 14V26'),
  g3bar: p(cubeD, G, '#e8eaf0') + p('M7 28V14M13 28V10M24 18V6', G, 'none', 4),
  g3a: p('M2 14L12 2H29V18L20 30H2z', G, '#e8eaf0') + f('M7 14Q16 6 27 8L20 22H6z', F),
  g3b: p(cubeD, G, '#e8eaf0') + f('M6 19h3v3H6zM14 22h3v3h-3zM13 7h3v3h-3zM20 5h3v3h-3zM23 14h3v3h-3z'),
  heat: f('M2 3H30V30H2z', F) + p('M7 9H30M7 16H30M7 23H30', '#f2f4f8', 'none', 4).replace('/>', ' stroke-dasharray="4 4"/>') + p('M2 2V31H31', G).replace('/>', ' stroke-dasharray="3 3"/>'),
  panel: p('M2 15H30V31H2zM2 21H30', G, F) + p('M2 12L9 2L16 11L23 2L30 12', '#9a9ca8') + p('M6 26H28', '#f2f4f8', 'none', 4).replace('/>', ' stroke-dasharray="4 4"/>'),
  square: p('M2 2H30V31H2z', '#83868f', F),
  mask1: p('M5 2L10 5H22L27 2V20L20 25H12L5 20z', G, '#e8eaf0') + f('M9 10l3-3 3 3zM17 10l3-3 3 3zM11 16H21L16 22z') + p('M2 29H30', F, 'none', 5).replace('/>', ' stroke-dasharray="5 2"/>'),
  mask2: p('M5 2L10 5H22L27 2V20L20 25H12L5 20zM5 3L26 22M26 3L5 22', G, '#e8eaf0') + p('M1 28H31', G, 'none', 6).replace('/>', ' stroke-dasharray="5 2"/>'),
  shield: p('M4 4L10 7H22L28 4V20Q26 28 16 30Q6 28 4 20z', G, '#d4d6de') + f('M17 7L27 6V20Q25 27 17 29zM8 12h4v3H8z') + f('M11 18H21L16 24z', '#555'),
  dots: f('M2 10H7V15H2zM10 10H15V15H10zM18 10H22V15H18zM2 20H7V25H2zM18 20H22V25H18z') + p('M27 3V30M23 8L27 2L31 8M23 25L27 31L31 25'),
  dotsr: f('M0 10H6V16H0zM16 10H22V16H16zM8 20H14V26H8z', K) + f('M8 10H14V16H8zM0 20H6V26H0zM16 20H22V26H16z', R) + p('M27 3V30M23 8L27 2L31 8M23 25L27 31L31 25', K),
  dotsk: f('M0 10H6V16H0zM16 10H22V16H16zM0 20H6V26H0zM8 20H14V26H8zM16 20H22V26H16z', K) + f('M8 10H14V16H8z', R) + p('M27 3V30M23 8L27 2L31 8M23 25L27 31L31 25', K),
  rotl: p('M9 4H21V30H9z', G, F) + p('M2 16Q4 26 12 24M21 12Q30 10 27 4', '#9a9ca8', 'none', 3),
  rotr: p('M11 4H23V30H11z', G, F) + p('M30 16Q28 26 20 24M11 12Q2 10 5 4', '#9a9ca8', 'none', 3),
  tiltl: p('M3 4L12 2L11 14L16 28L8 30L4 16z', G, F) + f('M16 10L24 3V8H31V12H24V17z', '#8e919c'),
  tiltr: p('M29 4L20 2L21 14L16 28L24 30L28 16z', G, F) + f('M16 10L8 3V8H1V12H8V17z', '#8e919c'),
  trap1: p('M9 5H23L30 24V30H2V24zM2 24H30', G, F),
  trap2: p('M2 2H30V9L24 28H8L2 9zM2 9H30', G, F),
  persp: p('M2 18H30V30H2z', G, F) + p('M4 18L11 2H21L28 18M11 8H21', '#888'),
  boxes: p('M12 2H30V20H12z', G, '#c8cad2') + p('M2 14H20V30H2z', G, F),
  fit: p('M10 10H22V22H10z', G, '#d8dae2') + f('M1 1H11L9 5L12 9L9 12L5 9L1 11zM31 1H21L23 5L20 9L23 12L27 9L31 11zM1 31H11L9 27L12 23L9 20L5 23L1 21zM31 31H21L23 27L20 23L23 20L27 23L31 21z', '#9a9ca8'),
  cube1: p('M9 12L14 7H25V19L20 25H9zM9 12H20V25M20 12L25 7M15 1V7M2 30L9 24M25 18H31', G, F),
  cube2: p('M2 10L12 1H30V22L22 30H2z', '#a0a2ac') + p('M8 13L13 7H25V19L20 25H8zM8 13H20V25M20 13L25 7', G, F)
};

document.querySelectorAll('[data-icons]').forEach(box => {
  box.innerHTML = box.dataset.icons.split(' ').map(token => {
    if (token === '|') return '<i class="sep"></i>';
    const name = token.replace(/[\^*]/g, '');
    const on = token.includes('*') ? ' on' : '';
    const caret = token.includes('^') ? '<i class="caret"></i>' : '';
    return `<button class="tool${on}" aria-label="${name}"><svg viewBox="0 0 32 32">${icons[name]}</svg></button>${caret}`;
  }).join('');
});

// Scatter plot: each row is [sepal width, list of sepal lengths]; repeats overlap.
const X = v => Math.round(340 + (v - 4) * 363.3);
const Y = v => Math.round(1623 - (v - 2) * 414.4);
const series = [
  { fill: '#e40010', rows: [[4.4, [5.7]], [4.2, [5.5]], [4.1, [5.2]], [4, [5.8]], [3.9, [5.4, 5.4]], [3.8, [5.1, 5.1, 5.7]], [3.7, [5.1, 5.3, 5.4]], [3.6, [4.6, 4.9, 5]], [3.5, [5, 5, 5.1, 5.1, 5.2, 5.5]], [3.4, [4.6, 4.8, 4.8, 5, 5, 5.1, 5.2, 5.4, 5.4]], [3.3, [5, 5.1]], [3.2, [4.4, 4.6, 4.7, 4.7, 5]], [3.1, [4.6, 4.8, 4.9, 4.9]], [3, [4.3, 4.4, 4.8, 4.8, 4.9, 5]], [2.9, [4.4]], [2.3, [4.5]]] },
  { fill: '#ee5a08', rows: [[3.4, [6]], [3.3, [6.3]], [3.2, [5.9, 6.4, 7]], [3.1, [6.7]], [3, [5.4, 5.6, 5.6, 5.7, 5.9, 6.1, 6.6, 6.7]], [2.9, [5.6, 5.7, 6, 6.1, 6.2, 6.4, 6.6]], [2.8, [5.7, 5.7, 6.1, 6.1, 6.5, 6.8]], [2.7, [5.2, 5.6, 5.8, 6]], [2.6, [5.5, 5.7, 5.8]], [2.5, [5.1, 5.5, 5.6, 6.3]], [2.4, [4.9, 5.5, 5.5]], [2.3, [5, 5.5, 6.3]], [2.2, [6, 6.2]], [2, [5]]] },
  { fill: '#fcfc00', rows: [[3.8, [7.7, 7.9]], [3.6, [7.2]], [3.4, [6.2, 6.3]], [3.3, [6.3, 6.7, 6.7]], [3.2, [6.4, 6.5, 6.8, 6.9, 7.2]], [3.1, [6.4, 6.7, 6.9, 6.9]], [3, [5.9, 6, 6.1, 6.5, 6.5, 6.7, 6.8, 7.1, 7.2, 7.6, 7.7]], [2.9, [6.3, 7.3]], [2.8, [5.6, 5.8, 6.2, 6.3, 6.4, 6.4, 7.4, 7.7]], [2.7, [5.8, 5.8, 6.3, 6.4]], [2.6, [6.1, 7.7]], [2.5, [4.9, 5.7, 6.3, 6.7]], [2.2, [6]]] }
];
const [L, Rt, T, B] = [340, 1884, 483, 1726];
let s = `<rect x="${L}" y="1003" width="${Rt - L}" height="362" fill="#78ffff"/>`;
let d = '';
for (let i = 0; i <= 17; i++) {
  const x = X(4 + i * 0.25), n = i % 2 ? 12 : 23;
  d += `M${x} ${B}v${n}`;
  if (i && i < 17) d += `M${x} ${T}v${n}`;
  if (i % 2 === 0) s += `<text x="${x - 1}" y="1808" font-size="50" text-anchor="middle">${(4 + i * 0.25).toFixed(1)}</text>`;
}
for (let i = 0; i <= 12; i++) {
  const v = 1.75 + i * 0.25, y = i === 12 ? T : Y(v), n = i % 2 ? 23 : 12;
  d += `M${L} ${y}h-${n}`;
  if (i && i < 12) d += `M${Rt} ${y}h-${n}`;
  if (i % 2) s += `<text x="296" y="${y + 16}" font-size="50" text-anchor="end">${v.toFixed(1)}</text>`;
}
for (const { fill, rows } of series)
  for (const [w, lengths] of rows)
    for (const l of lengths) s += `<circle cx="${X(l)}" cy="${Y(w) + 1}" r="15" fill="${fill}" fill-opacity=".9"/>`;
s += `<path d="M${L} 1003H${Rt}M${L} 1365H${Rt}" stroke="#5a0000" stroke-opacity=".85" stroke-width="4"/><path d="M${L} 1185H${Rt}" stroke="#c09020" stroke-width="4"/>`;
s += `<path d="M${L} ${T}H${Rt}V${B}H${L}z${d}" fill="none" stroke="#000" stroke-width="4"/>`;
s += '<text x="1111" y="1910" font-size="65" text-anchor="middle">Sepal Length (cm)</text>';
s += '<text transform="translate(205 1104) rotate(-90)" font-size="65" text-anchor="middle">Sepal Width (cm)</text>';
s += '<rect x="958" y="537" width="1109" height="66" fill="#fdfdfd" stroke="#20208c" stroke-width="2"/><rect x="1095" y="540" width="954" height="60" fill="#000"/>';
['#e60520', '#1a93dc', '#0000e6'].forEach((c, i) => {
  const x = 1035 + i * 359;
  s += `<circle cx="${x}" cy="572" r="15" fill="${c}"/><text x="${x + 72}" y="589" font-size="53" fill="#f2f2f2">%(1,m${i + 1},1)</text>`;
});
s += '<path d="M973 572v32l7-6 6 12 5-2-5-12h9z" fill="#fff" stroke="#111" stroke-width="2"/>';
document.getElementById('plot').innerHTML = s;
```
